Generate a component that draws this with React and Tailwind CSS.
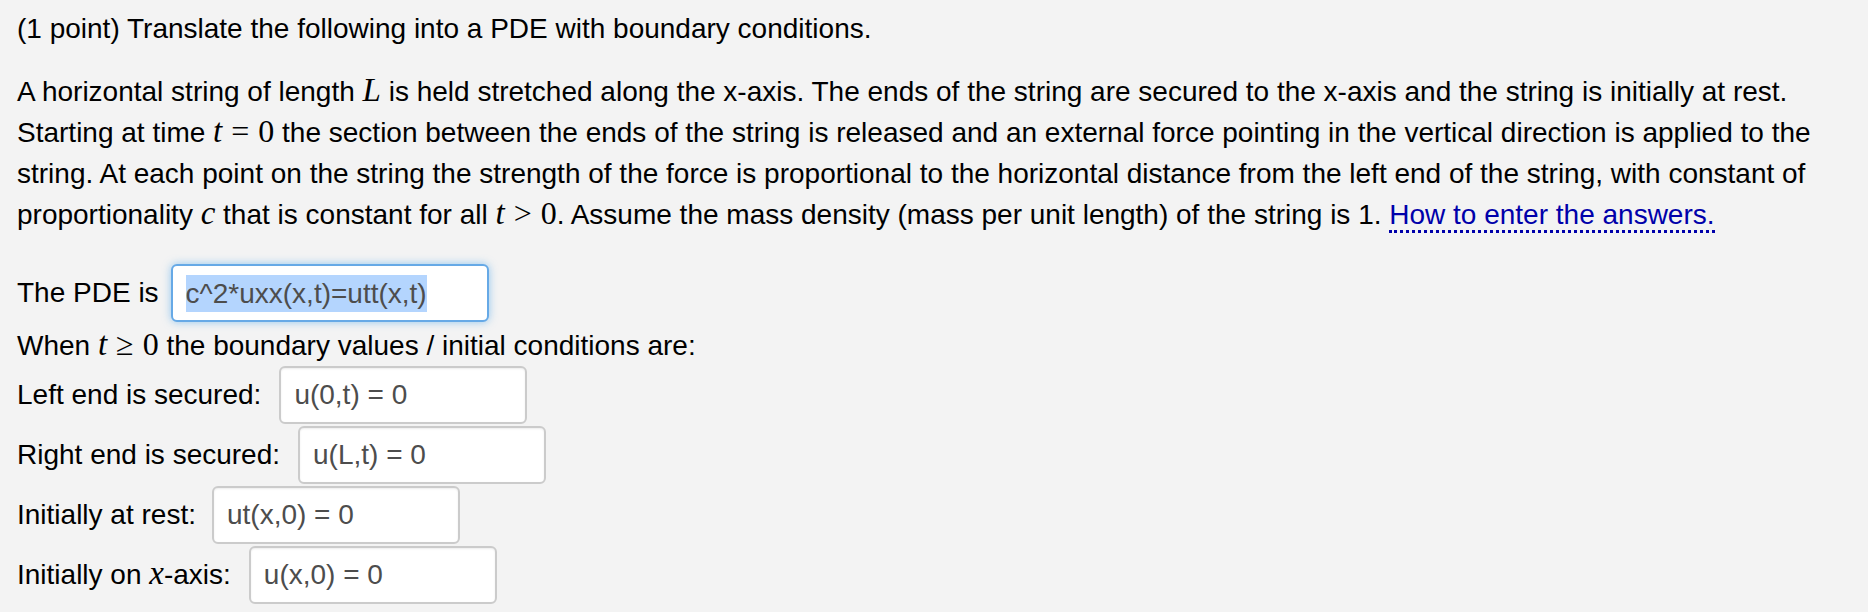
import React from 'react';

const M = ({ children }) => (
  <span className="font-['Liberation_Serif',serif] italic text-[33px] leading-none">{children}</span>
);

const R = ({ children, className = '' }) => (
  <span className={`font-['Liberation_Serif',serif] text-[32px] leading-none ${className}`}>{children}</span>
);

const Answer = ({ value, width = 'w-[248px]', focused = false }) => (
  <div
    className={`${width} h-[58px] shrink-0 bg-white rounded-[6px] flex items-center pl-[13px] text-[28px] text-[#4d4d4d] ${
      focused
        ? 'border-[2px] border-[#66a9e6] shadow-[0_0_8px_rgba(82,168,236,0.6)]'
        : 'border-[2px] border-[#cbcbcb] shadow-[inset_0_1px_2px_rgba(0,0,0,0.08)]'
    }`}
  >
    {focused ? <span className="bg-[#b4d5fe] leading-[37px]">{value}</span> : <span>{value}</span>}
  </div>
);

const Row = ({ label, value, gap = 'gap-[18px]', className = '' }) => (
  <div className={`flex items-center ${gap} h-[58px] ${className}`}>
    <span>{label}</span>
    <Answer value={value} />
  </div>
);

export default function App() {
  return (
    <div className="w-[1868px] h-[612px] bg-[#f3f3f3] text-black font-['Liberation_Sans',Arial,sans-serif] text-[28px] pt-[8px] px-[17px] overflow-hidden">
      <p className="leading-[41px]">(1 point) Translate the following into a PDE with boundary conditions.</p>

      <p className="leading-[41px] mt-[22px] whitespace-nowrap">
        A horizontal string of length <M>L</M> is held stretched along the x-axis. The ends of the string are secured to the x-axis and the string is initially at rest.
        <br />
        Starting at time <M>t</M>
        <R className="mx-[9px]">=</R>
        <R>0</R> the section between the ends of the string is released and an external force pointing in the vertical direction is applied to the
        <br />
        string. At each point on the string the strength of the force is proportional to the horizontal distance from the left end of the string, with constant of
        <br />
        proportionality <M>c</M> that is constant for all <M>t</M>
        <R className="mx-[9px]">&gt;</R>
        <R>0</R>. Assume the mass density (mass per unit length) of the string is 1.{' '}
        <a href="#" className="text-[#0000aa] border-b-[3px] border-dotted border-[#0000aa]">
          How to enter the answers.
        </a>
      </p>

      <div className="flex items-center gap-[12px] h-[58px] mt-[29px]">
        <span>The PDE is</span>
        <Answer value="c^2*uxx(x,t)=utt(x,t)" width="w-[318px]" focused />
      </div>

      <p className="leading-[41px] mt-[3px]">
        When <M>t</M>
        <R className="mx-[9px]">≥</R>
        <R>0</R> the boundary values / initial conditions are:
      </p>

      <Row label="Left end is secured:" value="u(0,t) = 0" />
      <Row label="Right end is secured:" value="u(L,t) = 0" className="mt-[2px]" />
      <Row label="Initially at rest:" value="ut(x,0) = 0" gap="gap-[16px]" className="mt-[2px]" />
      <Row
        label={
          <>
            Initially on <M>x</M>-axis:
          </>
        }
        value="u(x,0) = 0"
        className="mt-[2px]"
      />
    </div>
  );
}
